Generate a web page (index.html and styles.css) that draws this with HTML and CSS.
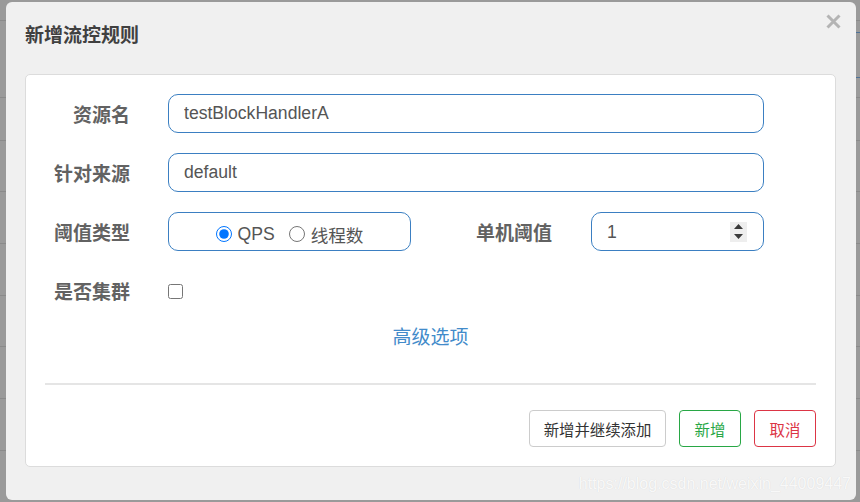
FILE: index.html
```html
<!DOCTYPE html>
<html lang="zh-CN">
<head>
<meta charset="utf-8">
<title>新增流控规则</title>
<link rel="stylesheet" href="styles.css">
</head>
<body>
<div class="modal">
  <div class="modal-header">
    <h4 class="modal-title">新增流控规则</h4>
    <button class="close" type="button" aria-label="关闭">
      <svg width="15" height="15" viewBox="0 0 15 15"><path d="M1.5 1.5 L13.5 13.5 M13.5 1.5 L1.5 13.5" stroke="#b4b4b4" stroke-width="3" fill="none"/></svg>
    </button>
  </div>
  <div class="card">
    <div class="row">
      <label class="label">资源名</label>
      <input class="field wide" type="text" value="testBlockHandlerA">
    </div>
    <div class="row">
      <label class="label">针对来源</label>
      <input class="field wide" type="text" value="default">
    </div>
    <div class="row">
      <label class="label">阈值类型</label>
      <div class="radio-box">
        <label class="radio"><input type="radio" name="grade" checked><span>QPS</span></label>
        <label class="radio"><input type="radio" name="grade"><span>线程数</span></label>
      </div>
      <label class="label label-mid">单机阈值</label>
      <div class="field number">
        <span class="num-value">1</span>
        <svg class="spinner" width="17" height="20" viewBox="0 0 17 20"><rect width="17" height="20" fill="#eeeeee"/><path d="M4 7 L8.5 2 L13 7 Z M4 12 L8.5 17 L13 12 Z" fill="#3a3a3a"/></svg>
      </div>
    </div>
    <div class="row row-check">
      <label class="label">是否集群</label>
      <input class="check" type="checkbox">
    </div>
    <div class="advanced"><a class="adv-link" href="#">高级选项</a></div>
    <div class="divider"></div>
    <div class="actions">
      <button class="btn btn-default" type="button">新增并继续添加</button>
      <button class="btn btn-success" type="button">新增</button>
      <button class="btn btn-danger" type="button">取消</button>
    </div>
  </div>
  <div class="watermark">https://blog.csdn.net/weixin_44009447</div>
</div>
</body>
</html>
```
FILE: styles.css
```css
html, body {
  margin: 0;
  padding: 0;
}

body {
  width: 860px;
  height: 502px;
  overflow: hidden;
  font-family: "Liberation Sans", "Noto Sans CJK SC", sans-serif;
  font-size: 16px;
  background-color: #9a9a9a;
  background-image:
    linear-gradient(#4f7398, #4f7398),
    linear-gradient(#4f7398, #4f7398),
    linear-gradient(#8a8a8a, #8a8a8a),
    linear-gradient(#8a8a8a, #8a8a8a),
    repeating-linear-gradient(to bottom, transparent 0, transparent 50.7px, #8a8a8a 50.7px, #8a8a8a 51.7px);
  background-repeat: no-repeat, no-repeat, no-repeat, no-repeat, no-repeat;
  background-size: 6px 1px, 6px 1px, 100% 1px, 100% 1px, 100% 362px;
  background-position: right 0 top 32px, right 0 top 77px, 0 20px, 0 97px, 0 89px;
  padding-top: 2px;
  box-sizing: border-box;
}

.modal {
  position: relative;
  margin-left: 6px;
  width: 850px;
  height: 498px;
  background: #f0f0f0;
  border-radius: 6px;
  box-sizing: border-box;
}

.modal-header {
  display: flex;
  justify-content: space-between;
  align-items: center;
  height: 72px;
  padding: 0 15px 4px 19px;
  box-sizing: border-box;
}

.modal-title {
  margin: 0;
  font-size: 19px;
  font-weight: bold;
  color: #404040;
  line-height: 26px;
}

.close {
  align-self: flex-start;
  margin-top: 12px;
  padding: 0;
  border: 0;
  background: transparent;
  width: 15px;
  height: 15px;
  display: flex;
}

.card {
  margin: 0 20px 0 19px;
  background: #fff;
  border: 1px solid #dcdcdc;
  border-radius: 5px;
  padding: 19px 0 0 0;
  height: 393px;
  box-sizing: border-box;
}

.row {
  display: flex;
  align-items: center;
  height: 39px;
  margin-bottom: 20px;
}

.row-check {
  margin-top: 2px;
  margin-bottom: 0;
}

.label {
  width: 104px;
  margin-right: 38px;
  padding-top: 5px;
  text-align: right;
  font-size: 19px;
  font-weight: bold;
  color: #626262;
  line-height: 26px;
  flex: none;
}

.label-mid {
  width: 141px;
  margin-right: 39px;
}

.field {
  height: 39px;
  box-sizing: border-box;
  border: 1px solid #3b7fc2;
  border-radius: 10px;
  padding: 0 15px;
  font-family: "Liberation Sans", "Noto Sans CJK SC", sans-serif;
  font-size: 17.6px;
  color: #555;
  background: #fff;
  outline: none;
  margin: 0;
}

.wide {
  width: 596px;
}

.radio-box {
  width: 243px;
  height: 39px;
  box-sizing: border-box;
  border: 1px solid #3b7fc2;
  border-radius: 10px;
  display: flex;
  justify-content: center;
  align-items: center;
  gap: 14px;
  padding-top: 5px;
  flex: none;
}

.radio {
  display: flex;
  align-items: center;
  gap: 6px;
  font-size: 17.6px;
  color: #555;
}

.radio input {
  width: 16px;
  height: 16px;
  margin: 0;
}

.number {
  width: 173px;
  display: flex;
  align-items: center;
  justify-content: space-between;
  padding-right: 16px;
}

.num-value {
  line-height: 20px;
}

.spinner {
  display: block;
}

.check {
  width: 15px;
  height: 15px;
  margin: 1px 0 0 0;
}

.advanced {
  margin-top: 15px;
  height: 26px;
  text-align: center;
  font-size: 19px;
  line-height: 26px;
}

.adv-link {
  color: #428bca;
  text-decoration: none;
}

.divider {
  margin: 32px 19px 0 19px;
  height: 2px;
  background: #e5e5e5;
}

.actions {
  display: flex;
  justify-content: flex-end;
  gap: 13px;
  margin-top: 25px;
  padding-right: 19px;
}

.btn {
  height: 37px;
  box-sizing: border-box;
  border-radius: 4px;
  background: #fff;
  font-family: "Liberation Sans", "Noto Sans CJK SC", sans-serif;
  font-size: 15.4px;
  padding: 0;
  cursor: pointer;
}

.btn-default {
  width: 137px;
  border: 1px solid #cccccc;
  color: #333;
}

.btn-success {
  width: 62px;
  border: 1px solid #28a745;
  color: #28a745;
}

.btn-danger {
  width: 62px;
  border: 1px solid #dc3545;
  color: #dc3545;
}

.watermark {
  position: absolute;
  right: 5px;
  bottom: 7px;
  font-size: 16px;
  line-height: 18px;
  color: rgba(255, 255, 255, 0.85);
  text-shadow: 0 0 1px rgba(0, 0, 0, 0.12);
  pointer-events: none;
}
```
